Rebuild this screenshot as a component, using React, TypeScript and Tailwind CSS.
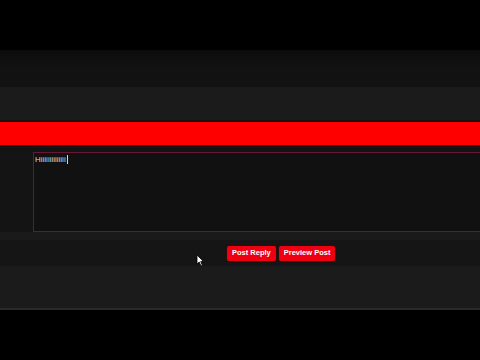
import React from "react";

export default function App() {
  return (
    <div className="w-[480px] h-[360px] overflow-hidden bg-black flex flex-col" style={{ fontFamily: '"Liberation Sans", Arial, sans-serif' }}>
      <div className="h-[50px] bg-black" />
      <div className="h-[37px] bg-gradient-to-b from-[#0c0c0c] to-[#121212] via-[#121212]" />
      <div className="h-[33px] bg-[#1b1b1b]" />
      <div className="h-[2px] bg-[#161212]" />
      <div className="h-[23px] bg-[#ff0000]" />
      <div className="h-[7px] bg-[#131313] border-t border-[#0f1a14]" />
      <div className="h-[80px] bg-[#141414] pl-[33px]">
        <div className="h-full border border-r-0 border-[#6a1535] bg-[#111111] pl-[1px] pt-[2px] flex items-start">
          <span className="text-[8px] leading-[9px] text-[#d8d8d8]">Hiiiiiiiiiiiiii</span>
          <span className="w-px h-[9px] bg-[#d8d8d8] ml-[1px]" />
        </div>
      </div>
      <div className="h-[8px] bg-[#1a1a1a]" />
      <div className="h-[26px] bg-[#151515] flex items-center pl-[227px] gap-[3px] relative">
        <button className="h-[15px] px-[5px] rounded-[2px] bg-[#ee0010] text-white text-[7.5px] font-bold leading-none shadow-[0_0_2px_#600]">Post Reply</button>
        <button className="h-[15px] px-[5px] rounded-[2px] bg-[#ee0010] text-white text-[7.5px] font-bold leading-none shadow-[0_0_2px_#600]">Preview Post</button>
        <svg className="absolute left-[196px] top-[14px]" width="9" height="13" viewBox="0 0 9 13">
          <path d="M1 1 L1 10 L3.2 8 L5 12 L6.4 11.3 L4.7 7.5 L7.5 7.5 Z" fill="white" stroke="black" strokeWidth="0.8" />
        </svg>
      </div>
      <div className="h-[42px] bg-[#1b1b1b]" />
      <div className="h-[2px] bg-[#2a2a2a]" />
      <div className="flex-1 bg-black" />
    </div>
  );
}
